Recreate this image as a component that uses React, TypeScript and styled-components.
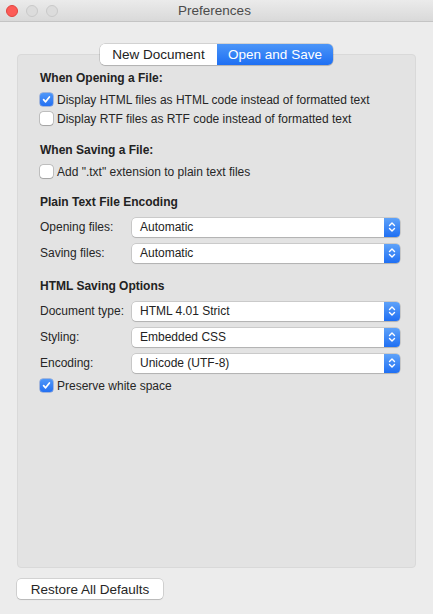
import React from 'react';
import styled, { createGlobalStyle } from 'styled-components';

const GlobalStyle = createGlobalStyle`
  html, body {
    margin: 0;
    padding: 0;
    background: #ececec;
  }
  body {
    font-family: "Liberation Sans", Arial, sans-serif;
    font-size: 12px;
    color: #262626;
    -webkit-font-smoothing: antialiased;
  }
`;

const Window = styled.div`
  width: 433px;
  height: 614px;
  display: flex;
  flex-direction: column;
  background: #ececec;
  overflow: hidden;
  white-space: nowrap;
`;

const TitleBar = styled.div`
  height: 22px;
  flex: 0 0 22px;
  box-sizing: border-box;
  display: flex;
  align-items: center;
  background: linear-gradient(#ebebeb, #d9d9d9);
  border-bottom: 1px solid #c4c4c4;
`;

const Lights = styled.div`
  display: flex;
  gap: 8px;
  padding-left: 6px;
`;

const Light = styled.span<{ $color: string; $border: string }>`
  width: 12px;
  height: 12px;
  border-radius: 50%;
  box-sizing: border-box;
  background: ${(p) => p.$color};
  border: 0.5px solid ${(p) => p.$border};
`;

const Title = styled.div`
  flex: 1;
  text-align: center;
  margin-right: 62px;
  color: #4b4b4b;
  font-size: 13.5px;
`;

const Body = styled.div`
  flex: 1;
  display: flex;
  flex-direction: column;
  padding: 22px 17px 15px 17px;
`;

const TabBar = styled.div`
  display: flex;
  justify-content: center;
  margin-bottom: -11px;
  position: relative;
  z-index: 1;
`;

const Segmented = styled.div`
  display: flex;
  height: 21px;
  border-radius: 5px;
  overflow: hidden;
  box-shadow: 0 0 0 0.5px rgba(0, 0, 0, 0.22), 0 1px 1px rgba(0, 0, 0, 0.12);
`;

const Segment = styled.div<{ $active?: boolean; $width: number }>`
  width: ${(p) => p.$width}px;
  display: flex;
  align-items: center;
  justify-content: center;
  height: 100%;
  font-size: 13.5px;
  color: ${(p) => (p.$active ? '#ffffff' : '#222')};
  background: ${(p) => (p.$active ? 'linear-gradient(#4b95f8, #1e6ff3)' : '#ffffff')};
`;

const Panel = styled.div`
  flex: 1;
  background: #e3e3e3;
  border: 1px solid #d9d9d9;
  border-radius: 4px;
  padding: 13px 15px 0 22px;
  display: flex;
  flex-direction: column;
`;

const Section = styled.div<{ $gap: number }>`
  display: flex;
  flex-direction: column;
  margin-top: ${(p) => p.$gap}px;
`;

const Heading = styled.div`
  height: 20px;
  line-height: 20px;
  font-weight: 700;
  font-size: 12px;
  color: #222;
  margin-bottom: 2px;
`;

const CheckRow = styled.label`
  height: 19px;
  display: flex;
  align-items: center;
  gap: 4px;
  color: #262626;
`;

const Box = styled.span<{ $checked?: boolean }>`
  width: 13px;
  height: 13px;
  box-sizing: border-box;
  border-radius: 3px;
  display: flex;
  align-items: center;
  justify-content: center;
  background: ${(p) => (p.$checked ? 'linear-gradient(#4f97f8, #2470f2)' : '#ffffff')};
  box-shadow: ${(p) =>
    p.$checked
      ? '0 0 0 0.5px rgba(20, 80, 200, 0.6)'
      : '0 0 0 0.5px rgba(0, 0, 0, 0.3), 0 0.5px 1px rgba(0, 0, 0, 0.15)'};
`;

const FieldRow = styled.div`
  height: 26px;
  display: flex;
  align-items: center;
`;

const FieldLabel = styled.div`
  width: 92px;
  flex: 0 0 92px;
  color: #262626;
`;

const Popup = styled.div`
  flex: 1;
  height: 19px;
  display: flex;
  align-items: center;
  background: #ffffff;
  border-radius: 4px;
  overflow: hidden;
  box-shadow: 0 0 0 0.5px rgba(0, 0, 0, 0.22), 0 1px 1px rgba(0, 0, 0, 0.12);
`;

const PopupText = styled.div`
  flex: 1;
  padding-left: 8px;
  color: #222;
`;

const Stepper = styled.div`
  width: 16px;
  height: 100%;
  display: flex;
  align-items: center;
  justify-content: center;
  background: linear-gradient(#5ea2f9, #1f6ff3);
`;

const Footer = styled.div`
  display: flex;
  margin-top: 11px;
`;

const Button = styled.button`
  width: 146px;
  height: 20px;
  padding: 0;
  border: none;
  border-radius: 4px;
  background: #ffffff;
  font: inherit;
  font-size: 13.5px;
  color: #262626;
  box-shadow: 0 0 0 0.5px rgba(0, 0, 0, 0.22), 0 1px 1px rgba(0, 0, 0, 0.12);
`;

function Check({ checked, children }: { checked?: boolean; children: React.ReactNode }) {
  return (
    <CheckRow>
      <Box $checked={checked}>
        {checked && (
          <svg width="9" height="9" viewBox="0 0 9 9">
            <path d="M1.6 4.7 L3.6 6.8 L7.4 1.9" fill="none" stroke="#fff" strokeWidth="1.7" strokeLinecap="round" strokeLinejoin="round" />
          </svg>
        )}
      </Box>
      {children}
    </CheckRow>
  );
}

function Select({ label, value }: { label: string; value: string }) {
  return (
    <FieldRow>
      <FieldLabel>{label}</FieldLabel>
      <Popup>
        <PopupText>{value}</PopupText>
        <Stepper>
          <svg width="8" height="12" viewBox="0 0 8 12">
            <path d="M1.5 4.5 L4 2 L6.5 4.5 M1.5 7.5 L4 10 L6.5 7.5" fill="none" stroke="#fff" strokeWidth="1.4" strokeLinecap="round" strokeLinejoin="round" />
          </svg>
        </Stepper>
      </Popup>
    </FieldRow>
  );
}

export default function App() {
  return (
    <Window>
      <GlobalStyle />
      <TitleBar>
        <Lights>
          <Light $color="#fc5b57" $border="#e0443e" />
          <Light $color="#dcdcdc" $border="#c9c9c9" />
          <Light $color="#dcdcdc" $border="#c9c9c9" />
        </Lights>
        <Title>Preferences</Title>
      </TitleBar>
      <Body>
        <TabBar>
          <Segmented>
            <Segment $width={117}>New Document</Segment>
            <Segment $active $width={116}>Open and Save</Segment>
          </Segmented>
        </TabBar>
        <Panel>
          <Section $gap={0}>
            <Heading>When Opening a File:</Heading>
            <Check checked>Display HTML files as HTML code instead of formatted text</Check>
            <Check>Display RTF files as RTF code instead of formatted text</Check>
          </Section>
          <Section $gap={12}>
            <Heading>When Saving a File:</Heading>
            <Check>Add ".txt" extension to plain text files</Check>
          </Section>
          <Section $gap={11}>
            <Heading>Plain Text File Encoding</Heading>
            <Select label="Opening files:" value="Automatic" />
            <Select label="Saving files:" value="Automatic" />
          </Section>
          <Section $gap={10}>
            <Heading>HTML Saving Options</Heading>
            <Select label="Document type:" value="HTML 4.01 Strict" />
            <Select label="Styling:" value="Embedded CSS" />
            <Select label="Encoding:" value="Unicode (UTF-8)" />
            <Check checked>Preserve white space</Check>
          </Section>
        </Panel>
        <Footer>
          <Button>Restore All Defaults</Button>
        </Footer>
      </Body>
    </Window>
  );
}
